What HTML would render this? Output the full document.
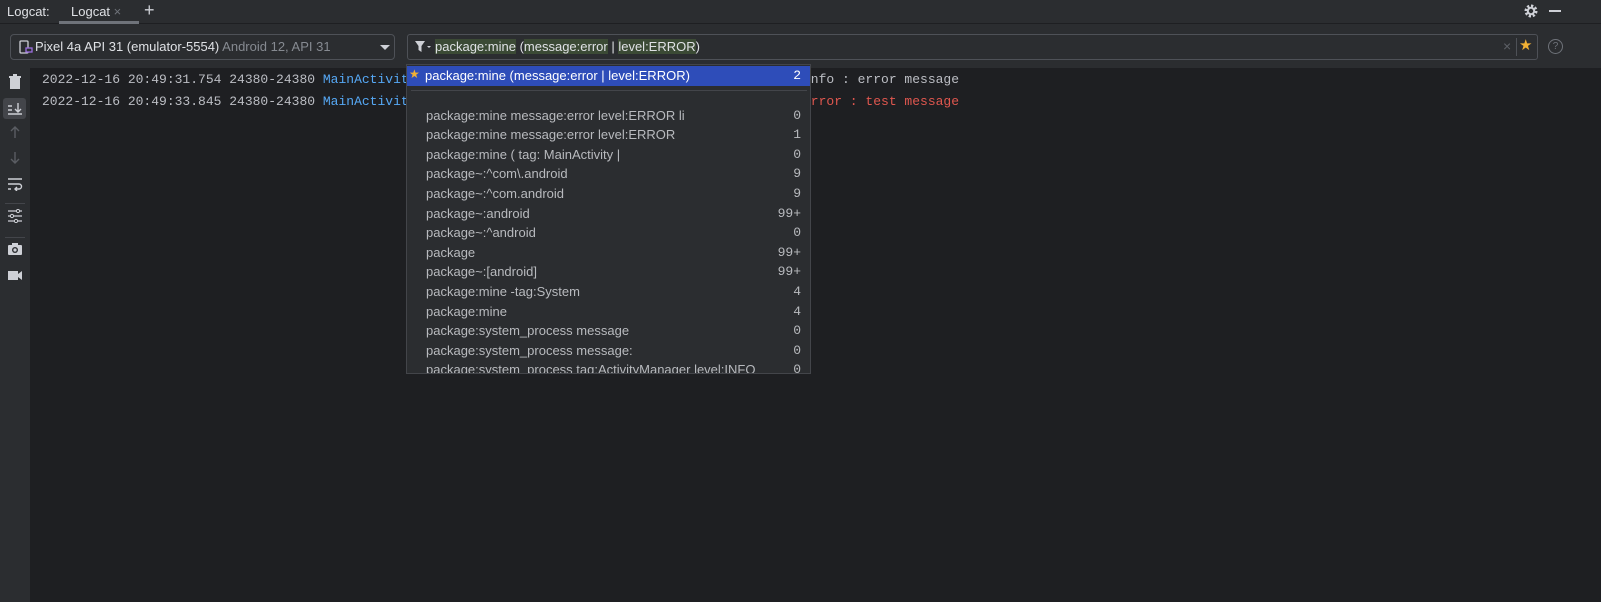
<!DOCTYPE html>
<html><head><meta charset="utf-8"><style>
*{margin:0;padding:0;box-sizing:border-box}
body{width:1601px;height:602px;background:#2b2d30;font-family:"Liberation Sans",sans-serif;font-size:13px;color:#dfe1e5;position:relative;overflow:hidden}
.abs{position:absolute}
.mono{font-family:"Liberation Mono",monospace}
.hl{background:#3b4a35}
.row{position:absolute;left:19px;width:375px;height:19px;line-height:19px;color:#b8babe}
.row span{position:absolute;right:0;font-family:"Liberation Mono",monospace}
</style></head><body>
<div class="abs" style="left:0;top:0;width:1601px;height:24px;border-bottom:1px solid #1e1f22"></div>
<div class="abs" style="left:7px;top:4px;color:#dfe1e5">Logcat:</div>
<div class="abs" style="left:71px;top:4px;color:#dfe1e5">Logcat <span style="color:#6f737a">×</span></div>
<div class="abs" style="left:59px;top:21px;width:80px;height:3px;background:#6f737a"></div>
<div class="abs" style="left:144px;top:0px;font-size:18px;color:#ced0d6">+</div>
<svg class="abs" style="left:1523px;top:3px" width="16" height="16" viewBox="0 0 16 16"><circle cx="8" cy="8" r="5" fill="none" stroke="#ced0d6" stroke-width="3" stroke-dasharray="2.2 1.7"/><circle cx="8" cy="8" r="3.2" fill="none" stroke="#ced0d6" stroke-width="2"/></svg>
<div class="abs" style="left:1549px;top:10px;width:12px;height:2px;background:#ced0d6"></div>
<!-- device -->
<div class="abs" style="left:10px;top:34px;width:385px;height:26px;border:1px solid #4e5157;border-radius:4px"></div>
<svg class="abs" style="left:19px;top:40px" width="14" height="14"><rect x="1" y="1" width="8" height="12" rx="1" fill="none" stroke="#ced0d6" stroke-width="1.3"/><rect x="7" y="8" width="6" height="4" fill="#2b2d30" stroke="#9b6ee0" stroke-width="1.3"/></svg>
<div class="abs" style="left:35px;top:39px;color:#dfe1e5">Pixel 4a API 31 (emulator-5554) <span style="color:#868a91">Android 12, API 31</span></div>
<div class="abs" style="left:380px;top:45px;border-left:5px solid transparent;border-right:5px solid transparent;border-top:5px solid #ced0d6"></div>
<!-- filter -->
<div class="abs" style="left:407px;top:34px;width:1131px;height:26px;border:1px solid #4e5157;border-radius:3px"></div>
<svg class="abs" style="left:414px;top:40px" width="18" height="14"><path d="M1 1h10L7.5 6v6L4.5 10V6z" fill="#ced0d6"/><path d="M13 6h4l-2 2z" fill="#ced0d6"/></svg>
<div class="abs" style="left:435px;top:39px;color:#dfe1e5"><span class="hl">package:mine</span> (<span class="hl">message:error</span> | <span class="hl">level:ERROR</span>)</div>
<div class="abs" style="left:1503px;top:38px;color:#5e6167;font-size:14px">×</div>
<div class="abs" style="left:1516px;top:38px;width:1px;height:18px;background:#4e5157"></div>
<div class="abs" style="left:1519px;top:36px;color:#f2b134;font-size:15px">★</div>
<div class="abs" style="left:1548px;top:39px;width:15px;height:15px;border:1px solid #6f737a;border-radius:50%;color:#6f737a;font-size:10px;text-align:center;line-height:13px">?</div>
<!-- left toolbar -->
<div class="abs" style="left:0;top:68px;width:30px;height:534px;background:#2b2d30"></div>
<svg class="abs" style="left:7px;top:74px" width="16" height="16"><rect x="3" y="4" width="10" height="11" fill="#ced0d6"/><rect x="2" y="2" width="12" height="2" fill="#ced0d6"/><rect x="6" y="0" width="4" height="2" fill="#ced0d6"/></svg>
<div class="abs" style="left:3px;top:98px;width:23px;height:21px;background:#43454a;border-radius:3px"></div>
<svg class="abs" style="left:7px;top:101px" width="16" height="15"><path d="M1 5h4M1 9h4M1 13h14M11 2v9M8 8l3 3 3-3" stroke="#ced0d6" stroke-width="1.4" fill="none"/></svg>
<svg class="abs" style="left:8px;top:125px" width="14" height="14"><path d="M7 13V2M3 6l4-4 4 4" stroke="#5a5d63" stroke-width="1.4" fill="none"/></svg>
<svg class="abs" style="left:8px;top:151px" width="14" height="14"><path d="M7 1v11M3 8l4 4 4-4" stroke="#5a5d63" stroke-width="1.4" fill="none"/></svg>
<svg class="abs" style="left:7px;top:177px" width="16" height="14"><path d="M1 2h14M1 7h11a2.5 2.5 0 010 5H8M10 10l-2 2 2 2M1 12h3" stroke="#ced0d6" stroke-width="1.4" fill="none"/></svg>
<div class="abs" style="left:5px;top:203px;width:20px;height:1px;background:#43454a"></div>
<svg class="abs" style="left:7px;top:209px" width="16" height="14"><path d="M1 2h14M1 7h14M1 12h14" stroke="#ced0d6" stroke-width="1.3"/><circle cx="11" cy="2" r="1.6" fill="#2b2d30" stroke="#ced0d6"/><circle cx="5" cy="7" r="1.6" fill="#2b2d30" stroke="#ced0d6"/><circle cx="9" cy="12" r="1.6" fill="#2b2d30" stroke="#ced0d6"/></svg>
<div class="abs" style="left:5px;top:237px;width:20px;height:1px;background:#43454a"></div>
<svg class="abs" style="left:7px;top:242px" width="16" height="14"><rect x="1" y="3" width="14" height="10" rx="1" fill="#ced0d6"/><rect x="5" y="1" width="6" height="3" fill="#ced0d6"/><circle cx="8" cy="8" r="3" fill="#2b2d30"/><circle cx="8" cy="8" r="1.6" fill="#ced0d6"/></svg>
<svg class="abs" style="left:7px;top:268px" width="16" height="14"><rect x="1" y="3" width="10" height="9" fill="#ced0d6"/><path d="M11 6l4-3v9l-4-3z" fill="#ced0d6"/></svg>
<!-- log -->
<div class="abs" style="left:30px;top:68px;width:1571px;height:534px;background:#1e1f22"></div>
<div class="abs mono" style="left:42px;top:69px;color:#bcbec4;line-height:22px;white-space:pre">2022-12-16 20:49:31.754 24380-24380 <span style="color:#56a8f5">MainActivity</span>
2022-12-16 20:49:33.845 24380-24380 <span style="color:#56a8f5">MainActivity</span></div>
<div class="abs mono" style="left:803px;top:69px;color:#bcbec4;line-height:22px;white-space:pre">info : error message
<span style="color:#e0574f">error : test message</span></div>
<!-- popup -->
<div class="abs" style="left:406px;top:64px;width:405px;height:310px;background:#2b2d30;border:1px solid #43454a;overflow:hidden">
<div class="abs" style="left:0;top:1px;width:405px;height:20px;background:#2e4db9"></div>
<div class="abs" style="left:2px;top:2px;color:#f2b134;font-size:12px">★</div>
<div class="abs" style="left:18px;top:1px;line-height:20px;width:376px;color:#fff">package:mine (message:error | level:ERROR)<span class="mono" style="position:absolute;right:0">2</span></div>
<div class="abs" style="left:4px;top:25px;width:396px;height:1px;background:#43454a"></div>
<div class="row" style="top:41px">package:mine message:error level:ERROR li<span>0</span></div>
<div class="row" style="top:60px">package:mine message:error level:ERROR<span>1</span></div>
<div class="row" style="top:80px">package:mine ( tag: MainActivity |<span>0</span></div>
<div class="row" style="top:99px">package~:^com\.android<span>9</span></div>
<div class="row" style="top:119px">package~:^com.android<span>9</span></div>
<div class="row" style="top:139px">package~:android<span>99+</span></div>
<div class="row" style="top:158px">package~:^android<span>0</span></div>
<div class="row" style="top:178px">package<span>99+</span></div>
<div class="row" style="top:197px">package~:[android]<span>99+</span></div>
<div class="row" style="top:217px">package:mine -tag:System<span>4</span></div>
<div class="row" style="top:237px">package:mine<span>4</span></div>
<div class="row" style="top:256px">package:system_process message<span>0</span></div>
<div class="row" style="top:276px">package:system_process message:<span>0</span></div>
<div class="row" style="top:295px">package:system_process tag:ActivityManager level:INFO<span>0</span></div>
</div>
</body></html>
